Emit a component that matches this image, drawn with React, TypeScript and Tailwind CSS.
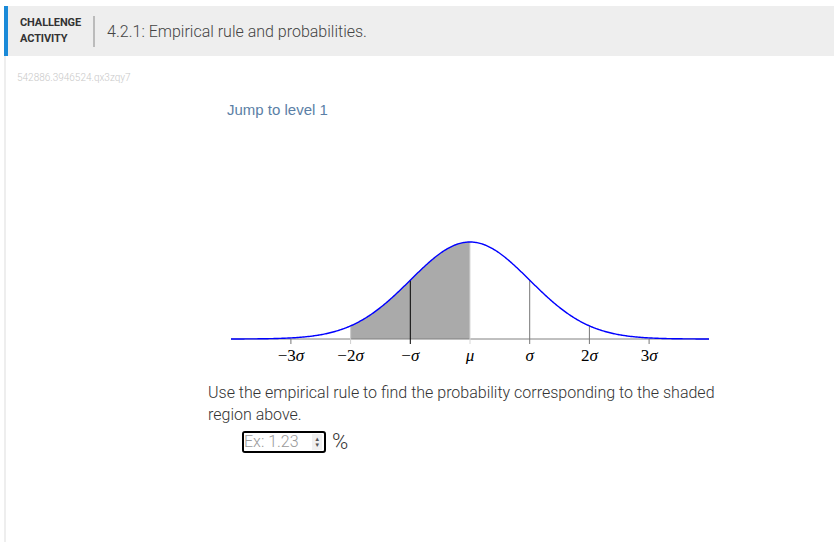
import React from "react";

const MU = 470;
const S = 59.7;
const BASE = 340;
const H = 97;
const yAt = (x: number) => BASE - H * Math.exp(-(((x - MU) / S) ** 2) / 2);

function curvePath(x0: number, x1: number) {
  const pts: string[] = [];
  for (let x = x0; x <= x1 + 0.001; x += 1) {
    pts.push(`${x.toFixed(1)},${yAt(x).toFixed(2)}`);
  }
  return pts;
}

function Chart() {
  const curve = "M" + curvePath(231, 709).join(" L");
  const shade = "M350," + BASE + " L" + curvePath(350, 470).join(" L") + " L470," + BASE + " Z";
  const marks = [-3, -2, -1, 0, 1, 2, 3];
  const labels: { k: number; pre: string }[] = [
    { k: -3, pre: "−3" },
    { k: -2, pre: "−2" },
    { k: -1, pre: "−" },
    { k: 0, pre: "" },
    { k: 1, pre: "" },
    { k: 2, pre: "2" },
    { k: 3, pre: "3" },
  ];
  return (
    <svg width={500} height={135} viewBox="220 230 500 135" className="block ml-[220px]">
      <path d={shade} fill="#aaaaaa" />
      <line x1={231} y1={BASE} x2={709} y2={BASE} stroke="#808080" strokeWidth={1} />
      {marks.map((k) => {
        const x = MU + k * S;
        const top = Math.abs(k) === 3 ? BASE : yAt(x);
        const col = k === -1 ? "#000000" : k === 0 ? "#d8d8d8" : k === -2 ? "#d0d0d0" : "#777777";
        return <line key={k} x1={x} y1={top} x2={x} y2={BASE + 5} stroke={col} strokeWidth={1} />;
      })}
      <path d={curve} fill="none" stroke="#0000ff" strokeWidth={1.4} />
      {labels.map((l) => (
        <text
          key={l.k}
          x={MU + l.k * S}
          y={362}
          textAnchor="middle"
          fontFamily="'Liberation Serif', 'DejaVu Serif', serif"
          fontSize={17}
          fill="#000"
        >
          {l.pre}
          <tspan fontStyle="italic">{l.k === 0 ? "μ" : "σ"}</tspan>
        </text>
      ))}
    </svg>
  );
}

export default function App() {
  return (
    <div className="w-[834px] h-[542px] bg-white overflow-hidden pt-[6px] pl-[4px]" style={{ fontFamily: "Roboto, 'Liberation Sans', sans-serif" }}>
      <div className="h-[50px] bg-[#eeeeee] border-l-[4px] border-[#1a8ad8] flex items-center">
        <div className="pl-[12px] pr-[12px] text-[11px] font-bold leading-[16px] text-[#333333] tracking-[-0.1px]">
          <div>CHALLENGE</div>
          <div>ACTIVITY</div>
        </div>
        <div className="w-[2px] h-[31px] bg-[#bbbbbb]" />
        <div className="pl-[12px] pt-[1px] text-[16px] font-light text-[#444444]">4.2.1: Empirical rule and probabilities.</div>
      </div>
      <div className="border-l-[2px] border-[#eeeeee] h-[486px]">
        <div className="pl-[11px] pt-[16px] text-[10px] leading-[12px] text-[#c8c8c8] font-light">542886.3946524.qx3zqy7</div>
        <div className="pl-[221px] pt-[17px] text-[15px] leading-[18px] text-[#5b7fa6]" style={{ fontFamily: "'Liberation Sans', Arial, sans-serif" }}>
          Jump to level 1
        </div>
        <div className="pt-[110px] -ml-[6px]">
          <Chart />
        </div>
        <div className="pl-[202px] pt-[18px] w-[720px] text-[16px] leading-[22px] font-light text-[#333333]">
          Use the empirical rule to find the probability corresponding to the shaded region above.
        </div>
        <div className="pl-[236px] pt-[5px] flex items-center gap-[6px]">
          <div className="w-[84px] h-[22px] border-2 border-black rounded-[3px] bg-white flex items-stretch overflow-hidden">
            <input
              type="text"
              placeholder="Ex: 1.23"
              className="w-[70px] min-w-0 px-[0px] text-[16px] leading-[18px] font-light text-[#333] placeholder:text-[#9a9a9a] bg-white outline-none"
              style={{ fontFamily: "Roboto, sans-serif" }}
            />
            <div className="w-[10px] my-[1px] bg-[#f0f0f0] flex flex-col items-center justify-center text-[#555] text-[6px] leading-[6px] ml-auto">
              <span>▲</span>
              <span>▼</span>
            </div>
            <div className="w-[2px]" />
          </div>
          <span className="text-[22px] leading-[22px] font-light text-[#333]">%</span>
        </div>
      </div>
    </div>
  );
}
